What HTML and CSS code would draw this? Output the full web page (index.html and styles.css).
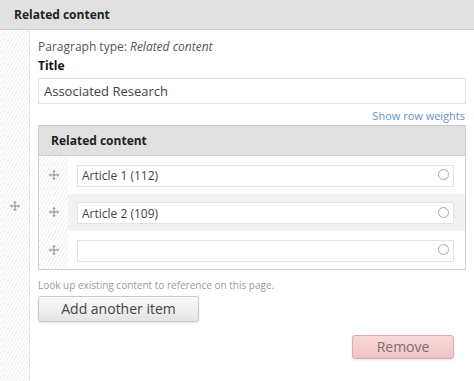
FILE: index.html
```html
<!DOCTYPE html>
<html lang="en">
<head>
  <meta charset="UTF-8" />
  <title>Related content</title>
  <link rel="stylesheet" href="styles.css">
</head>
<body>
  <div class="paragraph-header">Related content</div>
  <div class="paragraph">
    <div class="handle-col">
      <svg class="drag" viewBox="0 0 10 10"><path d="M5 0.5v9M0.5 5h9M3.6 1.9L5 0.5l1.4 1.4M3.6 8.1L5 9.5l1.4-1.4M1.9 3.6L0.5 5l1.4 1.4M8.1 3.6L9.5 5 8.1 6.4"/></svg>
    </div>
    <div class="paragraph-body">
      <p class="type">Paragraph type: <em>Related content</em></p>
      <label class="field-label">Title</label>
      <input class="text-input" type="text" value="Associated Research">
      <div class="weights"><a href="#">Show row weights</a></div>

      <div class="multi-table">
        <div class="table-head">Related content</div>
        <div class="table-row">
          <div class="row-handle">
            <svg class="drag" viewBox="0 0 10 10"><path d="M5 0.5v9M0.5 5h9M3.6 1.9L5 0.5l1.4 1.4M3.6 8.1L5 9.5l1.4-1.4M1.9 3.6L0.5 5l1.4 1.4M8.1 3.6L9.5 5 8.1 6.4"/></svg>
          </div>
          <div class="row-cell">
            <div class="autocomplete"><input type="text" value="Article 1 (112)"></div>
          </div>
        </div>
        <div class="table-row even">
          <div class="row-handle">
            <svg class="drag" viewBox="0 0 10 10"><path d="M5 0.5v9M0.5 5h9M3.6 1.9L5 0.5l1.4 1.4M3.6 8.1L5 9.5l1.4-1.4M1.9 3.6L0.5 5l1.4 1.4M8.1 3.6L9.5 5 8.1 6.4"/></svg>
          </div>
          <div class="row-cell">
            <div class="autocomplete"><input type="text" value="Article 2 (109)"></div>
          </div>
        </div>
        <div class="table-row">
          <div class="row-handle">
            <svg class="drag" viewBox="0 0 10 10"><path d="M5 0.5v9M0.5 5h9M3.6 1.9L5 0.5l1.4 1.4M3.6 8.1L5 9.5l1.4-1.4M1.9 3.6L0.5 5l1.4 1.4M8.1 3.6L9.5 5 8.1 6.4"/></svg>
          </div>
          <div class="row-cell">
            <div class="autocomplete"><input type="text" value=""></div>
          </div>
        </div>
      </div>

      <p class="description">Look up existing content to reference on this page.</p>
      <button class="btn" type="button">Add another item</button>
      <div class="actions">
        <button class="btn btn-remove" type="button">Remove</button>
      </div>
    </div>
  </div>
</body>
</html>
```

FILE: styles.css
```css
* {
  margin: 0;
  padding: 0;
  box-sizing: border-box;
}
body {
  font-family: 'Open Sans', sans-serif;
  color: #333;
  background: #fff;
  width: 474px;
  height: 381px;
  overflow: hidden;
  display: flex;
  flex-direction: column;
}
.paragraph-header {
  height: 30px;
  background: #e1e1e1;
  border-bottom: 1px solid #c8c8c8;
  font-size: 12px;
  font-weight: 700;
  color: #222;
  padding: 6px 0 0 14px;
}
.paragraph {
  flex: 1;
  display: flex;
}
.handle-col, .row-handle {
  background: repeating-linear-gradient(-60deg, #fff 0, #fff 2px, #f0f0f0 2px, #f0f0f0 3px);
  display: flex;
  align-items: center;
  justify-content: center;
}
.handle-col {
  width: 30px;
  border-right: 1px solid #e6e6e6;
}
.drag {
  width: 10px;
  height: 10px;
  fill: none;
  stroke: #8a8a8a;
  stroke-width: 1;
}
.paragraph-body {
  flex: 1;
  padding: 8px 8px 0 8px;
  display: flex;
  flex-direction: column;
}
.type {
  font-size: 12px;
  line-height: 17px;
  color: #555;
}
.field-label {
  font-size: 12px;
  font-weight: 700;
  line-height: 18px;
  margin-top: 2px;
  color: #111;
}
.text-input {
  margin-top: 3px;
  width: 100%;
  height: 26px;
  border: 1px solid #dedede;
  padding: 0 5px;
  font-family: 'Open Sans', sans-serif;
  font-size: 13px;
  color: #444;
  outline: none;
}
.weights {
  text-align: right;
  font-size: 11px;
  line-height: 15px;
  margin-top: 4px;
  padding-right: 1px;
}
.weights a {
  color: #6a92c6;
  text-decoration: none;
}
.multi-table {
  margin-top: 2px;
  border: 1px solid #cdcdcd;
}
.table-head {
  height: 30px;
  background: #e1e1e1;
  border-bottom: 1px solid #cdcdcd;
  font-size: 12px;
  font-weight: 700;
  color: #222;
  padding: 6px 0 0 12px;
}
.table-row {
  display: flex;
  height: 37.5px;
}
.row-handle {
  width: 29px;
}
.row-cell {
  flex: 1;
  display: flex;
  align-items: center;
  padding: 0 11px 0 9px;
}
.table-row.even .row-cell {
  background: #f1f1f1;
}
.autocomplete {
  position: relative;
  width: 100%;
}
.autocomplete input {
  width: 100%;
  height: 22px;
  border: 1px solid #e2e2e2;
  background: #fff;
  padding: 0 4px;
  font-family: 'Open Sans', sans-serif;
  font-size: 12px;
  color: #444;
  outline: none;
}
.autocomplete::after {
  content: '';
  position: absolute;
  right: 5px;
  top: 6px;
  width: 9px;
  height: 9px;
  border: 1px solid #a8a8a8;
  border-radius: 50%;
}
.description {
  margin-top: 8px;
  font-size: 10px;
  line-height: 14px;
  color: #9a9a9a;
}
.btn {
  align-self: flex-start;
  margin-top: 4px;
  width: 161px;
  height: 26px;
  border: 1px solid #c9c9c9;
  border-radius: 3px;
  background: linear-gradient(#fafafa, #e4e4e4);
  box-shadow: 0 1px 2px rgba(0,0,0,0.12);
  font-family: 'Open Sans', sans-serif;
  font-size: 14px;
  color: #444;
}
.actions {
  display: flex;
  justify-content: flex-end;
  padding-right: 12px;
  margin-top: 13px;
}
.btn-remove {
  width: 102px;
  height: 24px;
  margin-top: 0;
  border-color: #dcaaaa;
  background: linear-gradient(#f8d9d9, #efc3c3);
  color: #7a7070;
}
```
